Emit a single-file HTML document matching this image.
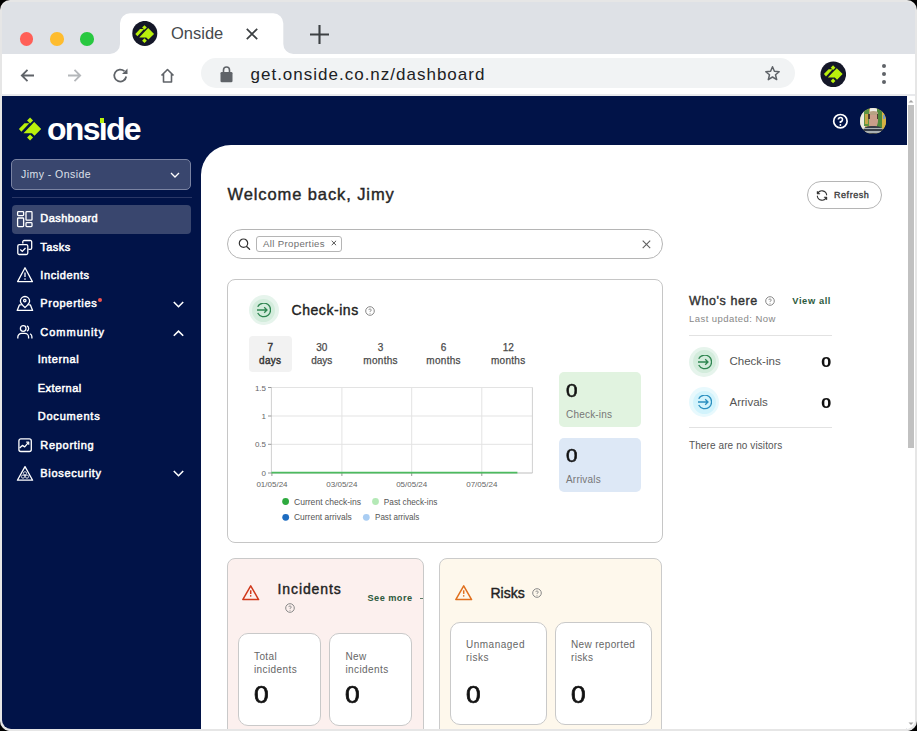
<!DOCTYPE html>
<html><head><meta charset="utf-8">
<style>
*{margin:0;padding:0;box-sizing:border-box}
html,body{width:917px;height:731px;overflow:hidden;background:#000;font-family:"Liberation Sans",sans-serif}
.a{position:absolute}
#win{position:absolute;left:0;top:0;width:917px;height:731px;border-radius:10px;overflow:hidden;background:#e6e6e6}
#tabbar{position:absolute;left:1.5px;top:2px;width:913.5px;height:52px;background:#dee1e6;border-radius:8px 8px 0 0}
.tl{position:absolute;width:13.6px;height:13.6px;border-radius:50%;top:30.4px}
#toolbar{position:absolute;left:1.5px;top:54px;width:913.5px;height:41px;background:#fff}
#page{position:absolute;left:2px;top:96px;width:913px;height:633px;background:linear-gradient(90deg,#011348 0,#011348 905px,#fff 905px);overflow:hidden;border-radius:0 0 9px 9px}
.txt{position:absolute;white-space:nowrap;line-height:1}
.nav{position:absolute;left:38px;color:#fff;font-weight:normal;-webkit-text-stroke:0.5px #fff;letter-spacing:0.45px;font-size:11px;white-space:nowrap;line-height:1}
.ic{position:absolute}
.sb{font-weight:normal!important;-webkit-text-stroke:0.4px currentColor}
</style></head><body>
<div id="win">
  <div id="tabbar">
    <div class="tl" style="left:18.3px;background:#ff5f57"></div>
    <div class="tl" style="left:48.5px;background:#febc2e"></div>
    <div class="tl" style="left:78.5px;background:#28c840"></div>
  </div>
  <!-- active tab -->
  <svg class="a" style="left:105px;top:12px" width="196" height="42" viewBox="0 0 196 42">
    <path d="M5 42 A10 10 0 0 0 15 32 L15 11.3 A10 10 0 0 1 25 1.3 L168.3 1.3 A10 10 0 0 1 178.3 11.3 L178.3 32 A10 10 0 0 0 188.3 42 Z" fill="#fff"/>
  </svg>
  <svg class="a" style="left:132px;top:21px" width="26" height="26" viewBox="0 0 26 26">
    <circle cx="12.8" cy="12.4" r="12.5" fill="#141728"/>
    <g transform="translate(-0.8,-1.4) scale(0.84)">
      <polygon points="15.8,6.6 18.6,9.4 15.8,12.2 13,9.4" fill="#b9f00c"/>
      <polygon points="4.9,17 10.5,11.2 15.3,11.2 7.4,19.8" fill="#b9f00c"/>
      <polygon points="20.2,10 27.2,17 20.5,23.7 17.9,21.2 9.5,21.2" fill="#b9f00c"/>
      <polygon points="15.8,22.3 18.6,25.1 15.8,27.9 13,25.1" fill="#b9f00c"/>
    </g>
  </svg>
  <div class="txt" style="left:171px;top:25px;font-size:16.5px;color:#46494d">Onside</div>
  <svg class="a" style="left:245px;top:27px" width="14" height="14" viewBox="0 0 14 14"><path d="M1.8 1.8L12.2 12.2M12.2 1.8L1.8 12.2" stroke="#3c4043" stroke-width="1.7"/></svg>
  <svg class="a" style="left:309px;top:23.5px" width="21" height="21" viewBox="0 0 21 21"><path d="M10.5 1V20M1 10.5H20" stroke="#3c4043" stroke-width="2.1"/></svg>

  <div id="toolbar"></div>
  <!-- nav buttons -->
  <svg class="a" style="left:19px;top:67px" width="17" height="17" viewBox="0 0 17 17"><path d="M15 8.5H3M8.5 2.8L2.8 8.5L8.5 14.2" stroke="#5f6368" stroke-width="1.8" fill="none"/></svg>
  <svg class="a" style="left:66px;top:67px" width="17" height="17" viewBox="0 0 17 17"><path d="M2 8.5H14M8.5 2.8L14.2 8.5L8.5 14.2" stroke="#b4b7ba" stroke-width="1.8" fill="none"/></svg>
  <svg class="a" style="left:112px;top:67px" width="17" height="17" viewBox="0 0 17 17"><path d="M14.2 9.5A6 6 0 1 1 12.4 4.2" stroke="#5f6368" stroke-width="1.8" fill="none"/><path d="M15.5 1.5V7H10Z" fill="#5f6368"/></svg>
  <svg class="a" style="left:159px;top:67px" width="17" height="17" viewBox="0 0 17 17"><path d="M2.5 8.5L8.5 2.5L14.5 8.5M4.5 7V15H12.5V7" stroke="#5f6368" stroke-width="1.6" fill="none" stroke-linejoin="round"/></svg>
  <div class="a" style="left:200.8px;top:58.2px;width:594.2px;height:30.3px;border-radius:15px;background:#f1f3f4"></div>
  <svg class="a" style="left:219px;top:66px" width="15" height="18" viewBox="0 0 15 18"><path d="M4.5 6.5V4A3 3 0 0 1 10.5 4V6.5" stroke="#5f6368" stroke-width="1.6" fill="none"/><rect x="1.5" y="6" width="12" height="10.3" rx="1.3" fill="#5f6368"/></svg>
  <div class="txt" style="left:250.5px;top:66px;font-size:17px;letter-spacing:1px;color:#202124">get.onside.co.nz/dashboard</div>
  <svg class="a" style="left:764px;top:65px" width="17" height="17" viewBox="0 0 17 17"><path d="M8.5 1.8L10.4 6.3L15.2 6.7L11.5 9.8L12.7 14.6L8.5 12L4.3 14.6L5.5 9.8L1.8 6.7L6.6 6.3Z" stroke="#5f6368" stroke-width="1.5" fill="none" stroke-linejoin="round"/></svg>
  <svg class="a" style="left:820px;top:60.5px" width="26" height="26" viewBox="0 0 26 26">
    <circle cx="13.3" cy="13.4" r="12.8" fill="#141728"/>
    <g transform="translate(-0.2,-1.2) scale(0.84)">
      <polygon points="15.8,6.6 18.6,9.4 15.8,12.2 13,9.4" fill="#b9f00c"/>
      <polygon points="4.9,17 10.5,11.2 15.3,11.2 7.4,19.8" fill="#b9f00c"/>
      <polygon points="20.2,10 27.2,17 20.5,23.7 17.9,21.2 9.5,21.2" fill="#b9f00c"/>
      <polygon points="15.8,22.3 18.6,25.1 15.8,27.9 13,25.1" fill="#b9f00c"/>
    </g>
  </svg>
  <div class="a" style="left:881.5px;top:63.5px;width:4px;height:4px;border-radius:50%;background:#5f6368"></div>
  <div class="a" style="left:881.5px;top:71.5px;width:4px;height:4px;border-radius:50%;background:#5f6368"></div>
  <div class="a" style="left:881.5px;top:79.5px;width:4px;height:4px;border-radius:50%;background:#5f6368"></div>
  <div class="a" style="left:1px;top:94px;width:914px;height:2px;background:#e8e9ec"></div>

  <div id="page">
    <!-- logo -->
    <svg class="a" style="left:9.5px;top:12.5px" width="30" height="32" viewBox="0 0 30 32">
      <g transform="translate(2,3)">
      <polygon points="16.05,5.4 19.05,8.4 16.05,11.4 13.05,8.4" fill="#b9f00c"/>
      <polygon points="4.9,17 10.5,11.2 15.3,11.2 7.4,19.8" fill="#b9f00c"/>
      <polygon points="20.2,10 27.2,17 20.5,23.7 17.9,21.2 9.5,21.2" fill="#b9f00c"/>
      <polygon points="16.05,22.6 19.05,25.6 16.05,28.6 13.05,25.6" fill="#b9f00c"/>
      </g>
    </svg>
    <div class="txt" style="left:45px;top:17px;font-size:32px;font-weight:bold;color:#fff;letter-spacing:-1.7px">ons&#305;de</div>
    <div class="a" style="left:97.8px;top:22.4px;width:4.2px;height:4.2px;background:#b9f00c"></div>
    <!-- help + avatar -->
    <svg class="a" style="left:830px;top:17px" width="17" height="17" viewBox="0 0 17 17"><circle cx="8.4" cy="8.2" r="6.7" stroke="#fff" stroke-width="1.7" fill="none"/><path d="M6.3 6.6A2.1 2.1 0 1 1 8.4 8.7V10" stroke="#fff" stroke-width="1.6" fill="none"/><circle cx="8.4" cy="12" r="0.9" fill="#fff"/></svg>
    <div class="a" style="left:858.4px;top:12px;width:26px;height:26px;border-radius:50%;overflow:hidden;background:#c9b060">
      <div class="a" style="left:0;top:0;width:26px;height:26px;filter:blur(0.45px)">
        <div class="a" style="left:-1px;top:-1px;width:6px;height:28px;background:#ecebe2"></div>
        <div class="a" style="left:4px;top:0;width:5px;height:18px;background:#5f9442"></div>
        <div class="a" style="left:5px;top:6px;width:3px;height:10px;background:#c8a848"></div>
        <div class="a" style="left:17px;top:0;width:4.5px;height:20px;background:#4e8a3a"></div>
        <div class="a" style="left:21.5px;top:0;width:5px;height:26px;background:#d7b243"></div>
        <div class="a" style="left:22.5px;top:7px;width:2px;height:4px;background:#7a9ac0"></div>
        <div class="a" style="left:9.5px;top:-1px;width:7px;height:5px;background:#efeee8"></div>
        <div class="a" style="left:8.4px;top:3.6px;width:8.8px;height:15px;border-radius:45% 45% 40% 40%;background:#c99e8a"></div>
        <div class="a" style="left:8.4px;top:3.2px;width:8.8px;height:4px;border-radius:50% 50% 0 0;background:#b7a283"></div>
        <div class="a" style="left:8px;top:5.5px;width:1.5px;height:5px;background:#4a3a30"></div>
        <div class="a" style="left:16.2px;top:5.5px;width:1.5px;height:5px;background:#4a3a30"></div>
        <div class="a" style="left:3px;top:18px;width:20px;height:10px;border-radius:40% 40% 0 0;background:repeating-linear-gradient(180deg,#373d47 0 1.7px,#a9b0b3 1.7px 3.4px)"></div>
      </div>
    </div>
    <!-- scrollbar -->
    <div class="a" style="left:905px;top:0;width:8px;height:633px;background:#fff"></div>
    <div class="a" style="left:906.3px;top:8.6px;width:5.5px;height:343px;background:#c1c1c1"></div>
    <svg class="a" style="left:905px;top:625px" width="8" height="6" viewBox="0 0 8 6"><path d="M1.5 1.5L4 4L6.5 1.5Z" fill="#a3a3a3"/></svg>
    <svg class="a" style="left:905px;top:2px" width="8" height="6" viewBox="0 0 8 6"><path d="M1.5 4.5L4 2L6.5 4.5Z" fill="#a3a3a3"/></svg>

    <!-- dropdown -->
    <div class="a" style="left:9px;top:63px;width:179.5px;height:30.5px;border-radius:5px;background:#39466e;border:1px solid #7a83a2"></div>
    <div class="txt" style="left:19px;top:73px;font-size:10.5px;letter-spacing:0.45px;color:#dde0ea">Jimy - Onside</div>
    <svg class="a" style="left:167px;top:74.5px" width="12" height="8" viewBox="0 0 12 8"><path d="M2 2L6 6L10 2" stroke="#fff" stroke-width="1.3" fill="none"/></svg>
    <div class="a" style="left:9.5px;top:101px;width:180px;height:1px;background:#2a3766"></div>

    <!-- nav -->
    <div class="a" style="left:9.5px;top:109px;width:179px;height:28.6px;border-radius:4px;background:#39466e"></div>
    <svg class="a" style="left:14px;top:114px" width="18" height="18" viewBox="0 0 18 18"><g stroke="#fff" stroke-width="1.3" fill="none"><rect x="1.6" y="1.6" width="6" height="4" rx="0.8"/><rect x="1.6" y="8" width="6" height="8.6" rx="0.8"/><rect x="10" y="1.6" width="6" height="8.6" rx="0.8"/><rect x="10" y="12.6" width="6" height="4" rx="0.8"/></g></svg>
    <div class="nav" style="left:38.3px;top:117px">Dashboard</div>

    <svg class="a" style="left:14px;top:142px" width="18" height="18" viewBox="0 0 18 18"><g stroke="#fff" stroke-width="1.3" fill="none"><path d="M6.8 5.6V3.8A1.3 1.3 0 0 1 8.1 2.5H14.4A1.3 1.3 0 0 1 15.7 3.8V10.1A1.3 1.3 0 0 1 14.4 11.4H12.4"/><rect x="1.8" y="6.6" width="10" height="9.9" rx="1.5"/><path d="M4.3 11.5L6.3 13.4L9.5 10"/></g></svg>
    <div class="nav" style="left:38.3px;top:145.5px;letter-spacing:0.45px">Tasks</div>

    <svg class="a" style="left:14px;top:170px" width="18" height="18" viewBox="0 0 18 18"><g stroke="#fff" stroke-width="1.3" fill="none" stroke-linejoin="round"><path d="M9 1.8L16.4 15.6H1.6Z"/><path d="M9 6.5V11"/></g><circle cx="9" cy="13.1" r="0.8" fill="#fff"/></svg>
    <div class="nav" style="left:38.3px;top:174px;letter-spacing:0.6px">Incidents</div>

    <svg class="a" style="left:14px;top:198px" width="18" height="18" viewBox="0 0 18 18"><g stroke="#fff" stroke-width="1.3" fill="none" stroke-linejoin="round"><path d="M9 13.6C9 13.6 4.4 9.6 4.4 7.1A4.6 4.6 0 0 1 13.6 7.1C13.6 9.6 9 13.6 9 13.6Z"/><circle cx="8.8" cy="6.6" r="1.2"/><path d="M5.6 10.9H3.4L1.2 16.4H16.6L14.4 10.9H12.4"/></g></svg>
    <div class="nav" style="left:38.3px;top:202px;letter-spacing:0.7px">Properties</div>
    <div class="a" style="left:95.7px;top:202px;width:4px;height:4px;border-radius:50%;background:#f2534f"></div>
    <svg class="a" style="left:170px;top:203.5px" width="13" height="9" viewBox="0 0 13 9"><path d="M1.8 2L6.5 6.7L11.2 2" stroke="#fff" stroke-width="1.6" fill="none"/></svg>

    <svg class="a" style="left:14px;top:226px" width="18" height="18" viewBox="0 0 18 18"><g stroke="#fff" stroke-width="1.3" fill="none"><circle cx="7.2" cy="6.5" r="2.8"/><path d="M1.8 16.6V15.2A3.8 3.8 0 0 1 5.6 11.4H8.8A3.8 3.8 0 0 1 12.6 15.2V16.6"/><path d="M10.9 3.9A2.8 2.8 0 0 1 10.9 9.1"/><path d="M14.1 11.8A3.5 3.5 0 0 1 15.9 14.8V16.6"/></g></svg>
    <div class="nav" style="left:38.3px;top:230.5px;letter-spacing:1px">Community</div>
    <svg class="a" style="left:170px;top:232.5px" width="13" height="9" viewBox="0 0 13 9"><path d="M1.8 6.8L6.5 2.1L11.2 6.8" stroke="#fff" stroke-width="1.6" fill="none"/></svg>

    <div class="nav" style="left:35.7px;top:258px;letter-spacing:0.6px">Internal</div>
    <div class="nav" style="left:35.7px;top:286.5px">External</div>
    <div class="nav" style="left:35.7px;top:315px;letter-spacing:0.8px">Documents</div>

    <svg class="a" style="left:14px;top:341px" width="18" height="18" viewBox="0 0 18 18"><g stroke="#fff" stroke-width="1.3" fill="none" stroke-linejoin="round"><rect x="2.9" y="1.9" width="12.4" height="12.6" rx="2"/><path d="M3.6 11L6.4 8.4L8.7 9.9L12.3 5.6"/><path d="M10.2 5.2H12.7V7.7" stroke-width="1.2"/></g></svg>
    <div class="nav" style="left:38.3px;top:343.5px;letter-spacing:0.7px">Reporting</div>

    <svg class="a" style="left:14px;top:369px" width="18" height="18" viewBox="0 0 18 18"><g stroke="#fff" stroke-width="1.3" fill="none" stroke-linejoin="round"><path d="M9 1.6L16.6 15.2H1.4Z"/></g><g stroke="#fff" stroke-width="0.8" fill="none"><circle cx="9" cy="8.3" r="1.6"/><circle cx="7" cy="11.6" r="1.6"/><circle cx="11" cy="11.6" r="1.6"/><circle cx="9" cy="10.5" r="0.5"/></g></svg>
    <div class="nav" style="left:38.3px;top:372px;letter-spacing:0.7px">Biosecurity</div>
    <svg class="a" style="left:170px;top:372.5px" width="13" height="9" viewBox="0 0 13 9"><path d="M1.8 2L6.5 6.7L11.2 2" stroke="#fff" stroke-width="1.6" fill="none"/></svg>

    <!-- content panel -->
    <div id="panel" class="a" style="left:199px;top:48.7px;width:706px;height:600px;background:#fff;border-radius:30px 0 0 0">
    </div>
  </div>

  <div id="main" class="a" style="left:0;top:0;width:917px;height:729px;overflow:hidden">
    <div class="txt sb" style="left:227.5px;top:186px;font-size:16.5px;letter-spacing:0.9px;color:#262626">Welcome back, Jimy</div>
    <!-- refresh -->
    <div class="a" style="left:807px;top:181px;width:74.5px;height:27.5px;border-radius:14px;border:1px solid #b5b5b5"></div>
    <svg class="a" style="left:815px;top:188.5px" width="14" height="13" viewBox="0 0 24 22"><g stroke="#333" stroke-width="1.8" fill="none" stroke-linecap="round" stroke-linejoin="round"><path d="M20 10a8.1 8.1 0 0 0 -15.5 -2m-.5 -4v4h4"/><path d="M4 12a8.1 8.1 0 0 0 15.5 2m.5 4v-4h-4"/></g></svg>
    <div class="txt" style="left:834px;top:190.8px;font-size:9px;letter-spacing:0.55px;color:#3a3a3a;-webkit-text-stroke:0.35px #3a3a3a">Refresh</div>
    <!-- search -->
    <div class="a" style="left:227px;top:229px;width:436px;height:29.5px;border-radius:15px;border:1px solid #b5b5b5"></div>
    <svg class="a" style="left:237px;top:237px" width="15" height="14" viewBox="0 0 15 14"><circle cx="6.5" cy="6.2" r="4.2" stroke="#333" stroke-width="1.2" fill="none"/><path d="M9.6 9.4L12.6 12.2" stroke="#333" stroke-width="1.3" stroke-linecap="round"/></svg>
    <div class="a" style="left:256px;top:236px;width:86px;height:15.8px;border-radius:3px;border:1px solid #b5b5b5"></div>
    <div class="txt" style="left:263px;top:238.8px;font-size:9.6px;letter-spacing:0.35px;color:#707070">All Properties</div>
    <svg class="a" style="left:330px;top:239px" width="8" height="8" viewBox="0 0 8 8"><path d="M1.7 1.8L6.1 6.2M6.1 1.8L1.7 6.2" stroke="#555" stroke-width="1"/></svg>
    <svg class="a" style="left:641.5px;top:239.5px" width="9" height="9" viewBox="0 0 9 9"><path d="M0.7 0.7L8.2 8.2M8.2 0.7L0.7 8.2" stroke="#606060" stroke-width="1.1"/></svg>

    <!-- checkins card -->
    <div class="a" style="left:227px;top:279px;width:436px;height:264px;border-radius:8px;border:1px solid #c6c6c6"></div>
    <div class="a" style="left:248.8px;top:295.2px;width:30.3px;height:30.3px;border-radius:50%;background:#e6f4ec"></div>
    <div class="a" style="left:252.4px;top:298.8px;width:23px;height:23px;border-radius:50%;background:#d3ecdc"></div>
    <svg class="a" style="left:256.2px;top:303px" width="15" height="15" viewBox="0 0 15 15"><g stroke="#2e8550" stroke-width="1.3" fill="none"><path d="M1.7 3.8A6.8 6.8 0 1 1 1.7 10"/><path d="M1 7H11M8.2 4.2L11 7L8.2 9.8"/></g></svg>
    <div class="txt sb" style="left:291.5px;top:303px;font-size:14px;letter-spacing:0.55px;color:#222">Check-ins</div>
    <svg class="a" style="left:364.5px;top:305.6px" width="10" height="10" viewBox="0 0 10 10"><circle cx="5" cy="5" r="4.3" stroke="#888" stroke-width="1" fill="none"/><path d="M3.8 4.1A1.2 1.2 0 1 1 5 5.3V5.9" stroke="#8a8a8a" stroke-width="0.85" fill="none"/><circle cx="5" cy="7.3" r="0.5" fill="#8a8a8a"/></svg>
    <!-- tabs -->
    <div class="a" style="left:248.6px;top:336.2px;width:43.3px;height:35.8px;border-radius:4px;background:#f2f2f2"></div>
    <div class="txt" style="left:248.6px;width:43.3px;text-align:center;top:343px;font-size:10px;color:#333;-webkit-text-stroke:0.4px #333">7</div>
    <div class="txt" style="left:248.6px;width:43.3px;text-align:center;top:355.5px;font-size:10px;letter-spacing:0.3px;color:#333;-webkit-text-stroke:0.4px #333">days</div>
    <div class="txt" style="left:296.7px;width:50px;text-align:center;top:343px;font-size:10px;color:#4a4a4a;-webkit-text-stroke:0.25px #4a4a4a">30</div>
    <div class="txt" style="left:296.7px;width:50px;text-align:center;top:355.5px;font-size:10px;color:#4a4a4a;-webkit-text-stroke:0.25px #4a4a4a">days</div>
    <div class="txt" style="left:355.6px;width:50px;text-align:center;top:343px;font-size:10px;color:#4a4a4a;-webkit-text-stroke:0.25px #4a4a4a">3</div>
    <div class="txt" style="left:355.6px;width:50px;text-align:center;top:355.5px;font-size:10px;letter-spacing:0.3px;color:#4a4a4a;-webkit-text-stroke:0.25px #4a4a4a">months</div>
    <div class="txt" style="left:418.6px;width:50px;text-align:center;top:343px;font-size:10px;color:#4a4a4a;-webkit-text-stroke:0.25px #4a4a4a">6</div>
    <div class="txt" style="left:418.6px;width:50px;text-align:center;top:355.5px;font-size:10px;letter-spacing:0.3px;color:#4a4a4a;-webkit-text-stroke:0.25px #4a4a4a">months</div>
    <div class="txt" style="left:483.2px;width:50px;text-align:center;top:343px;font-size:10px;color:#4a4a4a;-webkit-text-stroke:0.25px #4a4a4a">12</div>
    <div class="txt" style="left:483.2px;width:50px;text-align:center;top:355.5px;font-size:10px;letter-spacing:0.3px;color:#4a4a4a;-webkit-text-stroke:0.25px #4a4a4a">months</div>
    <!-- chart -->
    <svg class="a" style="left:240px;top:378px" width="300" height="150" viewBox="0 0 300 150">
      <g stroke="#e3e3e3" stroke-width="1">
        <path d="M31.4 9.5H292.4M31.4 38H292.4M31.4 66.3H292.4"/>
        <path d="M101.9 9.4V95M171.7 9.4V95M241.8 9.4V95"/>
      </g>
      <path d="M31.4 9.4V95M292.4 9.4V95" stroke="#d0d0d0"/>
      <path d="M31.4 95H292.4" stroke="#bdbdbd"/>
      <path d="M28 9.5H31.4M28 38H31.4M28 66.3H31.4M28 95H31.4M31.9 95V98M101.9 95V98M171.7 95V98M241.8 95V98" stroke="#999"/>
      <path d="M31.4 94.6H277.4" stroke="#4cbb5f" stroke-width="1.8"/>
      <g font-family="Liberation Sans" font-size="8" fill="#666" text-anchor="end">
        <text x="26" y="12.5">1.5</text><text x="26" y="41">1</text><text x="26" y="69.3">0.5</text><text x="26" y="98">0</text>
      </g>
      <g font-family="Liberation Sans" font-size="8" fill="#666" text-anchor="middle">
        <text x="32" y="109">01/05/24</text><text x="101.9" y="109">03/05/24</text><text x="171.7" y="109">05/05/24</text><text x="241.8" y="109">07/05/24</text>
      </g>
      <circle cx="45.6" cy="123.5" r="3.4" fill="#2eaa3f"/>
      <circle cx="135.5" cy="123.5" r="3.4" fill="#b4e9b6"/>
      <circle cx="45.7" cy="139.3" r="3.4" fill="#1d6cc0"/>
      <circle cx="126.3" cy="139.3" r="3.4" fill="#a9cdf3"/>
      <g font-family="Liberation Sans" font-size="8.6" fill="#555">
        <text x="54" y="126.5" textLength="67" lengthAdjust="spacingAndGlyphs">Current check-ins</text><text x="143.8" y="126.5" textLength="53.6" lengthAdjust="spacingAndGlyphs">Past check-ins</text>
        <text x="54" y="142" textLength="57.8" lengthAdjust="spacingAndGlyphs">Current arrivals</text><text x="135" y="142" textLength="44.4" lengthAdjust="spacingAndGlyphs">Past arrivals</text>
      </g>
    </svg>
    <!-- stat boxes -->
    <div class="a" style="left:559px;top:372px;width:81.5px;height:54.5px;border-radius:5px;background:#e1f3e0"></div>
    <div class="txt" style="left:566px;top:382px;font-size:18px;color:#111;-webkit-text-stroke:0.55px #111;transform:scaleX(1.15);transform-origin:0 0">0</div>
    <div class="txt" style="left:566px;top:409.5px;font-size:10px;letter-spacing:0.2px;color:#777">Check-ins</div>
    <div class="a" style="left:559px;top:437.5px;width:81.5px;height:54.5px;border-radius:5px;background:#dde8f6"></div>
    <div class="txt" style="left:566px;top:447px;font-size:18px;color:#111;-webkit-text-stroke:0.55px #111;transform:scaleX(1.15);transform-origin:0 0">0</div>
    <div class="txt" style="left:566px;top:475px;font-size:10px;letter-spacing:0.2px;color:#777">Arrivals</div>

    <!-- who's here -->
    <div class="txt sb" style="left:689px;top:295px;font-size:12.5px;letter-spacing:0.6px;color:#333">Who's here</div>
    <svg class="a" style="left:764.5px;top:296px" width="10" height="10" viewBox="0 0 10 10"><circle cx="5" cy="5" r="4.3" stroke="#888" stroke-width="1" fill="none"/><path d="M3.8 4.1A1.2 1.2 0 1 1 5 5.3V5.9" stroke="#8a8a8a" stroke-width="0.85" fill="none"/><circle cx="5" cy="7.3" r="0.5" fill="#8a8a8a"/></svg>
    <div class="txt" style="left:792.3px;top:296.8px;font-size:9.3px;font-weight:bold;letter-spacing:0.6px;color:#2d5a3d">View all</div>
    <div class="txt" style="left:689px;top:314px;font-size:9.5px;letter-spacing:0.45px;color:#888">Last updated: Now</div>
    <div class="a" style="left:688.5px;top:335px;width:143.5px;height:1px;background:#e2e2e2"></div>
    <div class="a" style="left:689.2px;top:346.7px;width:30px;height:30px;border-radius:50%;background:#e6f4ec"></div>
    <div class="a" style="left:692.7px;top:350.2px;width:23px;height:23px;border-radius:50%;background:#d3ecdc"></div>
    <svg class="a" style="left:697.2px;top:354.8px" width="15" height="15" viewBox="0 0 15 15"><g stroke="#2e8550" stroke-width="1.3" fill="none"><path d="M1.7 3.8A6.8 6.8 0 1 1 1.7 10"/><path d="M1 7H11M8.2 4.2L11 7L8.2 9.8"/></g></svg>
    <div class="txt" style="left:729.5px;top:356px;font-size:11.5px;color:#555">Check-ins</div>
    <div class="txt" style="left:800px;width:31.5px;text-align:right;top:354px;font-size:15px;font-weight:bold;color:#111;transform:scaleX(1.25);transform-origin:100% 0">0</div>
    <div class="a" style="left:689.2px;top:387.2px;width:30px;height:30px;border-radius:50%;background:#e8f9fd"></div>
    <div class="a" style="left:692.7px;top:390.7px;width:23px;height:23px;border-radius:50%;background:#d2f3fc"></div>
    <svg class="a" style="left:697.2px;top:395.2px" width="15" height="15" viewBox="0 0 15 15"><g stroke="#2b8fbf" stroke-width="1.3" fill="none"><path d="M1.7 3.8A6.8 6.8 0 1 1 1.7 10"/><path d="M1 7H11M8.2 4.2L11 7L8.2 9.8"/></g></svg>
    <div class="txt" style="left:729.5px;top:397px;font-size:11.5px;color:#555">Arrivals</div>
    <div class="txt" style="left:800px;width:31.5px;text-align:right;top:395px;font-size:15px;font-weight:bold;color:#111;transform:scaleX(1.25);transform-origin:100% 0">0</div>
    <div class="a" style="left:688.5px;top:427px;width:143.5px;height:1px;background:#e2e2e2"></div>
    <div class="txt" style="left:689px;top:440.5px;font-size:10px;letter-spacing:0.1px;color:#555">There are no visitors</div>

    <!-- incidents card -->
    <div class="a" style="left:227px;top:558px;width:197px;height:200px;border-radius:8px;border:1px solid #c9c9c9;background:#fcf0ee"></div>
    <svg class="a" style="left:242px;top:583.5px" width="19" height="18" viewBox="0 0 19 18"><g stroke="#d0391c" stroke-width="1.5" fill="none" stroke-linejoin="round"><path d="M8.7 1.9L16.6 15.6H0.8Z"/><path d="M8.7 6.3V9.9"/></g><circle cx="8.7" cy="11.9" r="0.8" fill="#d0391c"/></svg>
    <div class="txt sb" style="left:277.5px;top:581.5px;font-size:14px;letter-spacing:0.9px;color:#222">Incidents</div>
    <svg class="a" style="left:284.6px;top:603.2px" width="10" height="10" viewBox="0 0 10 10"><circle cx="5" cy="5" r="4.3" stroke="#888" stroke-width="1" fill="none"/><path d="M3.8 4.1A1.2 1.2 0 1 1 5 5.3V5.9" stroke="#8a8a8a" stroke-width="0.85" fill="none"/><circle cx="5" cy="7.3" r="0.5" fill="#8a8a8a"/></svg>
    <div class="txt" style="left:367.5px;top:594px;font-size:9.2px;font-weight:bold;letter-spacing:0.45px;color:#2d5a3d">See more</div>
    <div class="a" style="left:419.8px;top:597.7px;width:3.5px;height:1.2px;background:#5c7c68"></div>
    <div class="a" style="left:237.8px;top:633.4px;width:83.7px;height:92.2px;border-radius:10px;border:1px solid #c9c9c9;background:#fff"></div>
    <div class="txt" style="left:254px;top:651px;font-size:10px;letter-spacing:0.4px;color:#666;line-height:12.8px">Total<br>incidents</div>
    <div class="txt" style="left:253.5px;top:684px;font-size:23.5px;color:#111;-webkit-text-stroke:0.7px #111;transform:scaleX(1.12);transform-origin:0 0">0</div>
    <div class="a" style="left:329.4px;top:633.4px;width:83px;height:92.2px;border-radius:10px;border:1px solid #c9c9c9;background:#fff"></div>
    <div class="txt" style="left:345.5px;top:651px;font-size:10px;letter-spacing:0.4px;color:#666;line-height:12.8px">New<br>incidents</div>
    <div class="txt" style="left:345px;top:684px;font-size:23.5px;color:#111;-webkit-text-stroke:0.7px #111;transform:scaleX(1.12);transform-origin:0 0">0</div>

    <!-- risks card -->
    <div class="a" style="left:438.7px;top:558px;width:223.8px;height:200px;border-radius:8px;border:1px solid #cbcbcb;background:#fef8ec"></div>
    <svg class="a" style="left:454.5px;top:583.5px" width="19" height="18" viewBox="0 0 19 18"><g stroke="#e0701e" stroke-width="1.5" fill="none" stroke-linejoin="round"><path d="M8.7 1.9L16.6 15.6H0.8Z"/><path d="M8.7 6.3V9.9"/></g><circle cx="8.7" cy="11.9" r="0.8" fill="#e0701e"/></svg>
    <div class="txt sb" style="left:490.5px;top:586px;font-size:14px;letter-spacing:0px;color:#222">Risks</div>
    <svg class="a" style="left:531.6px;top:587.8px" width="10" height="10" viewBox="0 0 10 10"><circle cx="5" cy="5" r="4.3" stroke="#888" stroke-width="1" fill="none"/><path d="M3.8 4.1A1.2 1.2 0 1 1 5 5.3V5.9" stroke="#8a8a8a" stroke-width="0.85" fill="none"/><circle cx="5" cy="7.3" r="0.5" fill="#8a8a8a"/></svg>
    <div class="a" style="left:450.4px;top:622.2px;width:96.3px;height:102.5px;border-radius:10px;border:1px solid #c9c9c9;background:#fff"></div>
    <div class="txt" style="left:466px;top:639px;font-size:10px;letter-spacing:0.5px;color:#666;line-height:12.5px">Unmanaged<br>risks</div>
    <div class="txt" style="left:466.3px;top:683.5px;font-size:23.5px;color:#111;-webkit-text-stroke:0.7px #111;transform:scaleX(1.12);transform-origin:0 0">0</div>
    <div class="a" style="left:555.4px;top:622.2px;width:96.2px;height:102.5px;border-radius:10px;border:1px solid #c9c9c9;background:#fff"></div>
    <div class="txt" style="left:571px;top:639px;font-size:10px;letter-spacing:0.35px;color:#666;line-height:12.5px">New reported<br>risks</div>
    <div class="txt" style="left:571.3px;top:683.5px;font-size:23.5px;color:#111;-webkit-text-stroke:0.7px #111;transform:scaleX(1.12);transform-origin:0 0">0</div>
  </div>
  <div class="a" style="left:0;top:729px;width:917px;height:2px;background:#e6e6e6"></div>
</div>
</body></html>
